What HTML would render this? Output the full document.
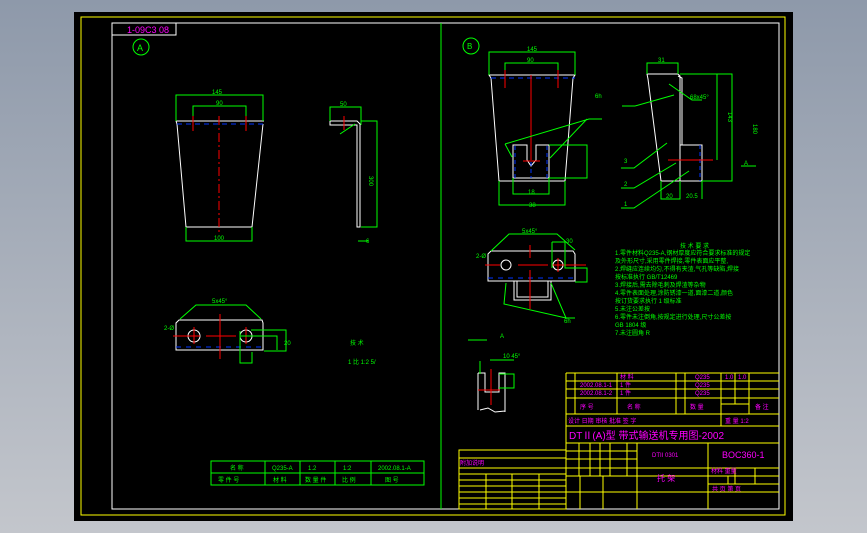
<!DOCTYPE html>
<html><head><meta charset="utf-8"><style>
html,body{margin:0;padding:0;width:867px;height:533px;overflow:hidden;background:linear-gradient(#8e99aa,#c3c6cc);}
svg{position:absolute;left:0;top:0}
text{font-family:"Liberation Sans","Noto Sans CJK SC",sans-serif}
</style></head><body>
<svg width="867" height="533" viewBox="0 0 867 533" xmlns="http://www.w3.org/2000/svg">
<rect x="74" y="12" width="719" height="509" fill="#000"/>
<rect x="81" y="17" width="704" height="498" fill="none" stroke="#ffff00" stroke-width="1"/>
<rect x="112" y="23" width="667" height="486" fill="none" stroke="#fff" stroke-width="1"/>
<line x1="441" y1="23" x2="441" y2="509" stroke="#00ff00"/>
<rect x="112" y="23" width="64" height="12" fill="none" stroke="#fff"/>
<text x="127" y="33" font-size="9" fill="#ff00ff">1-09C3 08</text>
<!-- A label -->
<circle cx="141" cy="47" r="8" fill="none" stroke="#00ff00"/>
<text x="137" y="51" font-size="9" fill="#00ff00">A</text>
<g fill="none" stroke-width="1">
<!-- view A front -->
<path d="M176 121H264 M176 121L177 124L186 227H252L263 124" stroke="#fff"/>
<line x1="177" y1="124" x2="263" y2="124" stroke="#0033ff" stroke-dasharray="5,4"/>
<line x1="219" y1="116" x2="219" y2="232" stroke="#ff0000" stroke-dasharray="9,3,2,3"/>
<path d="M193 116V131 M246 116V131" stroke="#ff0000"/>
<path d="M176 121V95H263V121 M193 116V106H246V116 M186 227V241H252V227" stroke="#00ff00"/>
<!-- side A -->
<path d="M330 121H357L360 124V227H357V125H330Z" stroke="#fff"/>
<path d="M330 121V107H361V125 M361 121H377V227H361 M358 241H368" stroke="#00ff00"/>
<line x1="344" y1="116" x2="344" y2="130" stroke="#ff0000"/>
<path d="M340 134L355 124" stroke="#00ff00"/>
<!-- bottom view A -->
<path d="M179 320H262L263 323V350H176V323Z" stroke="#fff"/>
<circle cx="194" cy="336" r="6" stroke="#fff"/>
<circle cx="246" cy="336" r="6" stroke="#fff"/>
<line x1="176" y1="347" x2="263" y2="347" stroke="#0033ff" stroke-dasharray="5,5"/>
<path d="M173 336H200 M206 336H236 M240 336H266 M220 314V359 M194 327V344 M246 327V344" stroke="#ff0000"/>
<path d="M180 319L196 305H246L261 319 M240 336H277V350 M251 330H286V351H264 M240 331V363H252V352" stroke="#00ff00"/>
<!-- view B -->
<circle cx="471" cy="46" r="8" stroke="#00ff00"/>
<path d="M489 75H575L573 78L565 181H499L491 78Z" stroke="#fff"/>
<path d="M513 145H527V160L531 166L536 160V145H549V178H513Z" stroke="#fff"/>
<line x1="491" y1="78" x2="575" y2="78" stroke="#0033ff" stroke-dasharray="5,4"/>
<path d="M531 78V178 M515 146V178 M547 146V178" stroke="#0033ff" stroke-dasharray="4,3"/>
<path d="M531 75V160 M505 70V88 M558 70V88 M523 161H540" stroke="#ff0000"/>
<path d="M489 75V52H575V75 M505 70V63H558V70 M499 181V205H565V181 M513 178V194H549V178 M549 145H587V178H549 M505 144L589 119H602 M587 119L550 158 M505 144L512 157" stroke="#00ff00"/>
<!-- side B -->
<path d="M647 74H678L680 76V181H661L648 79Z M678 76L682 78V145 M680 145H702V181H680" stroke="#fff"/>
<line x1="700" y1="145" x2="700" y2="181" stroke="#0033ff" stroke-dasharray="4,3"/>
<line x1="668" y1="160" x2="713" y2="160" stroke="#ff0000"/>
<path d="M647 74V63H678V74 M680 74H732V181H702 M717 74V160 M680 74H730 M661 181V199H680V181 M702 181V199 M635 106L674 95 M622 106H635 M669 84L692 100H702 M621 168H634L667 143 M621 188H634L676 163 M621 208H634L689 171 M741 166H756" stroke="#00ff00"/>
<!-- section mid -->
<path d="M491 251H573L575 254V281H488V254Z M514 281V300H551V281 M517 281V297H548V281" stroke="#fff"/>
<circle cx="506" cy="265" r="5" stroke="#fff"/>
<circle cx="558" cy="265" r="5" stroke="#fff"/>
<line x1="488" y1="278" x2="575" y2="278" stroke="#0033ff" stroke-dasharray="5,5"/>
<path d="M530 245V258 M530 270V309 M485 265H500 M518 265H548 M552 265H586 M558 258V272" stroke="#ff0000"/>
<path d="M491 251L509 234H557L575 250 M552 242H565V268H587V282H575 M552 242V268 M506 283L504 304L566 318H575 M551 283L566 318" stroke="#00ff00"/>
<!-- small detail -->
<path d="M478 373V410 M478 373H485V392H499V373H505V412 M480 410L488 408L495 412L505 411" stroke="#fff"/>
<path d="M491 369V405 M478 390H500" stroke="#ff0000"/>
<path d="M490 360H514 M480 374V361 M499 374H514V388H499" stroke="#00ff00"/>
<line x1="468" y1="340" x2="487" y2="340" stroke="#00ff00"/>
</g>
<g fill="#00ff00" font-size="6">
<text x="212" y="94">145</text><text x="216" y="105">90</text><text x="214" y="240">100</text>
<text x="340" y="106">50</text><text x="369" y="176" transform="rotate(90 369 176)">300</text><text x="366" y="243">6</text>
<text x="212" y="303">5x45°</text><text x="164" y="330">2-Ø</text><text x="284" y="345">20</text>
<text x="350" y="345">技 术</text><text x="348" y="364">1 比 1:2 5/</text>
<text x="467" y="49" font-size="8">B</text>
<text x="527" y="51">145</text><text x="527" y="62">90</text><text x="529" y="207">38</text><text x="528" y="194">18</text><text x="595" y="98">6h</text>
<text x="658" y="62">31</text><text x="690" y="99">68x45°</text><text x="728" y="112" transform="rotate(90 728 112)">143</text><text x="753" y="124" transform="rotate(90 753 124)">180</text>
<text x="744" y="165">A</text><text x="624" y="163">3</text><text x="624" y="186">2</text><text x="624" y="206">1</text><text x="666" y="198">20</text><text x="686" y="198">20.5</text>
<text x="522" y="233">5x45°</text><text x="566" y="243">30</text><text x="476" y="258">2-Ø</text><text x="564" y="323">6h</text>
<text x="500" y="338">A</text><text x="503" y="358">10 45°</text>
<text x="680" y="248">技 术 要 求</text>
<text x="615" y="255">1.零件材料Q235-A,钢材厚度应符合要求标准的规定</text>
<text x="615" y="263">及外形尺寸,采用零件焊接,零件表面应平整,</text>
<text x="615" y="271">2.焊缝应连续均匀,不得有夹渣,气孔等缺陷,焊接</text>
<text x="615" y="279">按标准执行 GB/T12469</text>
<text x="615" y="287">3.焊接后,需去除毛刺及焊渣等杂物</text>
<text x="615" y="295">4.零件表面处理,涂防锈漆一道,面漆二道,颜色</text>
<text x="615" y="303">按订货要求执行 1 级标准</text>
<text x="615" y="311">5.未注公差按</text>
<text x="615" y="319">6.零件未注倒角,按规定进行处理,尺寸公差按</text>
<text x="615" y="327">GB 1804 级</text>
<text x="615" y="335">7.未注圆角 R</text>
</g>
<!-- green table left -->
<g stroke="#00ff00" fill="none"><rect x="211" y="461" width="213" height="24"/><path d="M211 473H424 M265 461V485 M300 461V485 M335 461V485 M371 461V485"/></g>
<g fill="#00ff00" font-size="6"><text x="230" y="470">名 称</text><text x="272" y="470">Q235-A</text><text x="308" y="470">1.2</text><text x="343" y="470">1:2</text><text x="378" y="470">2002.08.1-A</text>
<text x="218" y="482">零 件 号</text><text x="273" y="482">材 料</text><text x="305" y="482">数 量 件</text><text x="342" y="482">比 例</text><text x="385" y="482">图 号</text></g>
<!-- title block -->
<g stroke="#ffff00" fill="none">
<path d="M566 373H779 M566 381H779 M566 389H779 M566 398H779 M566 414H779 M566 426H779 M566 443H779 M566 468H779 M566 476H779 M566 492H779 M566 373V509 M575 373V414 M617 373V414 M676 373V414 M685 373V414 M721 373V426 M735 373V404 M749 373V414 M721 404H749 M637 443V509 M708 443V509 M708 484H779 M735 468V484 M755 468V484 M728 476V484 M579 443V476 M590 443V476 M600 443V476 M610 443V476 M627 443V476 M566 451H637 M566 459H637"/>
<rect x="459" y="450" width="107" height="59"/>
<path d="M459 458H566 M459 468H566 M459 474H566 M459 480H566 M459 486H566 M459 492H566 M459 498H566 M459 504H566 M486 474V509 M512 474V509 M539 474V509 M580 476V509 M603 476V509"/>
</g>
<g fill="#ff00ff" font-size="6">
<text x="620" y="379">材 料</text><text x="695" y="379">Q235</text><text x="725" y="379">1.0</text><text x="738" y="379">1.0</text>
<text x="580" y="387">2002.08.1-1</text><text x="620" y="387">1 件</text><text x="695" y="387">Q235</text>
<text x="580" y="395">2002.08.1-2</text><text x="620" y="395">1 件</text><text x="695" y="395">Q235</text>
<text x="580" y="409">序 号</text><text x="627" y="409">名 称</text><text x="690" y="409">数 量</text><text x="755" y="409">备 注</text>
<text x="568" y="423">设计 日期 审核 批准 签 字</text><text x="725" y="423">重 量 1:2</text>
<text x="569" y="439" font-size="10">DTⅡ(A)型 带式输送机专用图-2002</text>
<text x="652" y="457">DTII 0301</text><text x="722" y="458" font-size="9">BOC360-1</text>
<text x="657" y="481" font-size="8">托 架</text>
<text x="460" y="465">附加说明</text>
<text x="711" y="473">材料 重量</text><text x="712" y="491">共 页 第 页</text>
</g>
</svg>
</body></html>
